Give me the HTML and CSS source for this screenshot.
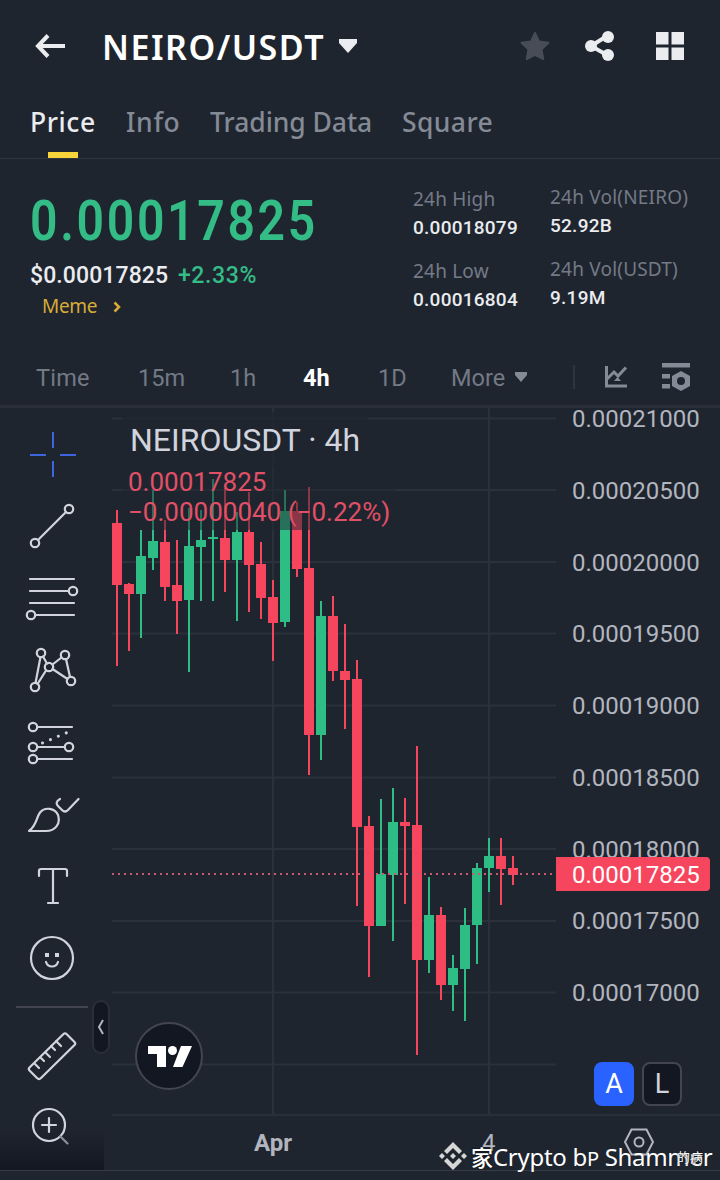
FILE: index.html
```
<!DOCTYPE html>
<html lang="en">
<head>
  <meta charset="UTF-8" />
  <meta name="viewport" content="width=device-width, initial-scale=1" />
  <title>NEIRO/USDT</title>
  <link rel="stylesheet" href="styles.css">
</head>
<body>

<header class="topbar">
  <svg class="back" width="32" height="24" viewBox="0 0 32 24"><path d="M14 1.500 4 12l10 10.500M4 12h27" /></svg>
  <h1 class="pair">NEIRO/USDT</h1>
  <svg class="caret" width="20" height="16" viewBox="0 0 20 16"><path d="M1 1h18v4l-9 10-9-10z" /></svg>
  <div class="actions">
    <svg class="star" width="32" height="32" viewBox="0 0 32 32"><path d="m16 3 4 8.500 9.500 1.200-7 6.700 1.800 9.600-8.300-4.200-8.300 4.200 1.800-9.600-7-6.700L12 11.500z" /></svg>
    <svg class="share" width="32" height="32" viewBox="0 0 32 32"><path d="M23 6 7 16l16 9" /><circle cx="7" cy="16" r="6" /><circle cx="24" cy="7" r="6" /><circle cx="24" cy="25" r="6" /></svg>
    <svg class="apps" width="28" height="28" viewBox="0 0 28 28"><path d="M0 0h12.500v12.500H0zM15.500 0H28v12.500H15.500zM0 15.500h12.500V28H0zM15.500 15.500H28V28H15.500z" /></svg>
  </div>
</header>

<nav class="tabs">
  <a class="tab tab-active">Price</a>
  <a class="tab tab-info">Info</a>
  <a class="tab tab-trading">Trading Data</a>
  <a class="tab">Square</a>
</nav>

<section class="ticker">
  <div class="quote">
    <div class="last-price">0.00017825</div>
    <div class="fiat"><span class="usd">$0.00017825</span><span class="change">+2.33%</span></div>
    <div class="tag">Meme <svg width="8" height="12" viewBox="0 0 8 12"><path d="m1.500 1.500 4.500 4.500-4.500 4.500" /></svg></div>
  </div>
  <div class="stats">
    <div class="stat"><span class="label">24h High</span><span class="value">0.00018079</span></div>
    <div class="stat"><span class="label">24h Low</span><span class="value">0.00016804</span></div>
  </div>
  <div class="stats stats-vol">
    <div class="stat"><span class="label">24h Vol(NEIRO)</span><span class="value">52.92B</span></div>
    <div class="stat"><span class="label">24h Vol(USDT)</span><span class="value">9.19M</span></div>
  </div>
</section>

<div class="intervals">
  <span class="iv iv-time">Time</span>
  <span class="iv iv-15m">15m</span>
  <span class="iv iv-1h">1h</span>
  <span class="iv iv-4h">4h</span>
  <span class="iv iv-1d">1D</span>
  <span class="iv iv-more">More</span>
  <svg class="more-caret" width="14" height="12" viewBox="0 0 14 12"><path d="M1 1h12v3l-6 7-6-7z" /></svg>
  <i class="split"></i>
  <svg class="chart-type" width="24" height="24" viewBox="0 0 24 24"><path d="M2.500 1v20H23M3 14l7-7 4 4 8-8.500" /><path class="fill" d="m13.500 12 3.500 4H10z" /></svg>
  <svg class="chart-set" width="28" height="28" viewBox="0 0 28 28"><path d="M0 0h28v4.500H0zM0 11h8v4.500H0zM0 21h8v4.500H0z" /><path fill-rule="evenodd" d="m19 8 9 5v10l-9 5-9-5V13zm0 6a4 4 0 1 0 0 8 4 4 0 0 0 0-8z" /></svg>
</div>

<main class="chart">
  <aside class="tools">
    <svg class="tool tool-active" viewBox="0 0 56 56"><path d="M29 5v16M29 34v16M6 28h16M36 28h16" /></svg>
    <svg class="tool" viewBox="0 0 56 56"><path d="m14 41 28-28" /><circle cx="11" cy="44" r="4.200" /><circle cx="45" cy="10" r="4.200" /></svg>
    <svg class="tool" viewBox="0 0 56 56"><path d="M6 8h44M6 20h39M6 32h44M11 44h39" /><circle cx="49" cy="20" r="4.200" /><circle cx="7" cy="44" r="4.200" /></svg>
    <svg class="tool" viewBox="0 0 56 56"><path d="m11.500 40 5-26M19 13.500l4 7M28.500 21.500l9-7M42 16l4 18M28.500 26l15 10M22 27.500 13.500 41" /><circle cx="17" cy="10" r="4.200" /><circle cx="41" cy="12" r="4.200" /><circle cx="25" cy="24" r="4.200" /><circle cx="11" cy="44" r="4.200" /><circle cx="47" cy="38" r="4.200" /></svg>
    <svg class="tool" viewBox="0 0 56 56"><path d="M13 12h35M13 32h28M13 44h35" /><path class="dots" d="m18.500 28 28-12" /><circle cx="9" cy="12" r="4.200" /><circle cx="9" cy="32" r="4.200" /><circle cx="9" cy="44" r="4.200" /><circle cx="45" cy="32" r="4.200" /></svg>
    <svg class="tool" viewBox="0 0 56 56"><path d="M5 44c8-6 7-13 11-18.500 5-6 15-4.500 18 2.500 3 9-3 16-12 16zM36 12c-4 2-4 5-2 7l4 4c2 2 4 2 6 0l10.500-11" /></svg>
    <svg class="tool" viewBox="0 0 56 56"><path d="M15 17v-5q0-2 2-2h24q2 0 2 2v5M29 10v34M24 44h10" /></svg>
    <svg class="tool" viewBox="0 0 56 56"><circle cx="28" cy="27" r="21" /><path d="M22 31c2 6 10 6 12 0" /><path class="eyes" d="M21 22h4v4h-4zM31 22h4v4h-4z" /></svg>
    <hr>
    <svg class="tool" viewBox="0 0 56 56"><path d="M39.500 6q1.500-1.500 3 0l8 8q1.500 1.500 0 3L17 50q-2 2-4 0l-7.500-7.500q-1.500-1.500 0-3zM10 35l5 5M16 29l4 4M21 24l5 5M27 18l4 4M32 13l5 5" /></svg>
    <svg class="tool" viewBox="0 0 56 56"><circle cx="25" cy="25" r="16" /><path d="M18 25h14M25 18v14" /><path class="handle" d="m36.500 36.500 7 7" /></svg>
  </aside>

  <div class="plot">
    <svg class="candles" width="444" height="706" viewBox="112 408 444 706">
      <path class="grid" d="M112 418.500h444M112 490h444M112 562h444M112 633.500h444M112 705.500h444M112 777.500h444M112 849h444M112 921h444M112 992.500h444M112 1064.500h444M273 408v707M489 408v707" />
      <path class="wick down" d="M117 510V666M129 583V651M165 520V601M177 540V634M225 488V592M249 492V612M261 542V619M273 580V661M297 502V577M309 487V775M333 596V681M345 624V729M357 660V906M369 816V977M405 798V904M417 746V1055M441 907V1000M501 838V905M513 856V885" />
      <path class="wick up" d="M141 530V638M153 490V570M189 508V672M201 510V601M213 479V601M237 512V621M285 490V627M321 601V760M381 799V926M393 788V941M429 877V973M453 955V1011M465 908V1021M477 863V964M489 838V892" />
      <path class="body down" d="M117 523V585M129 584V594M165 542V587M177 585V601M225 538V560M249 532V565M261 564V598M273 597V623M297 511V569M309 568V735M333 616V671M345 671V680M357 679V827M369 826V926M405 822V826M417 825V960M441 915V985M501 856V869M513 868V875" />
      <path class="body up" d="M141 556V594M153 541V558M189 546V600M201 540V547M213 537V539M237 532V560M285 511V622M321 616V735M381 874V926M393 822V875M429 915V960M453 968V985M465 925V969M477 868V925M489 856V868" />
      <path class="last-line" d="M112 874H556" />
    </svg>
    <div class="legend">
      <div class="symbol">NEIROUSDT · 4h</div>
      <div class="readout"><div>0.00017825</div><div>−0.00000040 (−0.22%)</div></div>
    </div>
    <svg class="tv" width="68" height="68" viewBox="0 0 68 68"><circle class="disc" cx="34" cy="34" r="33" /><path d="M13 24h18v21h-9V32h-9zM46 24h11l-9.500 21H38z" /><circle cx="37.500" cy="28.500" r="4.500" /></svg>
    <div class="collapse"><svg width="8" height="16" viewBox="0 0 8 16"><path d="M6 1 2 8l4 7" /></svg></div>
  </div>

  <div class="prices">
    <span>0.00021000</span>
    <span>0.00020500</span>
    <span>0.00020000</span>
    <span>0.00019500</span>
    <span>0.00019000</span>
    <span>0.00018500</span>
    <span>0.00018000</span>
    <span>0.00017500</span>
    <span>0.00017000</span>
    <div class="price-tag">0.00017825</div>
    <div class="scale-modes"><b class="mode mode-auto">A</b><b class="mode">L</b></div>
  </div>

  <div class="times">
    <span class="month">Apr</span>
    <span class="day">4</span>
    <svg class="gear" width="32" height="28" viewBox="0 0 32 28"><path d="M8.500 1.500h15L30 14l-6.500 12.500h-15L2 14z" /><circle cx="16" cy="14" r="4.500" /></svg>
  </div>

  <div class="watermark">
    <svg width="28" height="28" viewBox="0 0 28 28"><path d="m14 0 9 9-3 3-6-6-6 6-3-3zM14 28l-9-9 3-3 6 6 6-6 3 3zM3 11l3 3-3 3-3-3zM25 11l3 3-3 3-3-3zM14 11l3 3-3 3-3-3z" /></svg>
    <span class="wm-cjk">家</span><span class="wm-text">Crypto b<small>P</small> Shammer</span>
    <span class="wm-over">的病</span>
  </div>
</main>

</body>
</html>
```
FILE: styles.css
```
* { box-sizing: border-box; }
body {
  margin: 0;
  width: 720px;
  height: 1180px;
  overflow: hidden;
  background: #1f252f;
  color: #eaecef;
  font-family: "Noto Sans", sans-serif;
}
svg { display: block; flex: none; }

/* header */
.topbar {
  display: flex;
  align-items: center;
  height: 92px;
  padding: 0 36px 0 34px;
}
.back { fill: none; stroke: #eaecef; stroke-width: 4; }
.pair {
  width: 221px;
  margin: 2px 0 0 36px;
  font-size: 34px;
  line-height: 40px;
  font-weight: 650;
  letter-spacing: 1.5px;
  color: #fff;
  white-space: nowrap;
}
.caret { margin-left: 15px; fill: #eaecef; }
.actions { display: flex; align-items: center; gap: 32px; margin-left: auto; }
.star { margin-right: 1px; fill: #474d57; stroke: #474d57; stroke-width: 2; stroke-linejoin: round; }
.share { fill: #eaecef; }
.share path { fill: none; stroke: #eaecef; stroke-width: 4; }
.apps { fill: #eaecef; margin-left: 8px; }

.tabs {
  display: flex;
  height: 67px;
  padding-left: 30px;
  border-bottom: 1px solid #30363f;
  font-size: 26.5px;
  font-weight: 500;
  line-height: 60px;
  letter-spacing: 0.4px;
  color: #848a96;
  white-space: nowrap;
}
.tab { width: 96px; height: 66px; }
.tab-info { width: 84px; letter-spacing: 0.7px; }
.tab-trading { width: 192px; letter-spacing: -0.05px; }
.tab-active { color: #eaecef; letter-spacing: 0.6px; }
.tab-active::after {
  content: "";
  display: block;
  width: 30px;
  height: 6px;
  margin-left: 18px;
  background: #f8d33a;
}

/* ticker */
.ticker { display: flex; height: 187px; padding: 25px 0 0 30px; }
.quote { width: 383px; font-family: Roboto, sans-serif; }
.last-price {
  width: 330px;
  font-size: 56px;
  line-height: 74px;
  font-weight: 650;
  letter-spacing: 3.1px;
  color: #34bc87;
  /* condensed digits */
  transform: scaleX(0.86);
  transform-origin: 0 50%;
}
.fiat { font-size: 23px; line-height: 35px; font-weight: 500; }
.usd { display: inline-block; width: 148px; letter-spacing: 0.1px; }
.change { color: #34bc87; letter-spacing: 0.6px; }
.tag {
  display: flex;
  align-items: center;
  gap: 16px;
  padding-left: 12px;
  font-family: "Noto Sans", sans-serif;
  font-size: 19px;
  line-height: 27px;
  letter-spacing: -0.3px;
  color: #d9ab37;
}
.tag svg { fill: none; stroke: #d9ab37; stroke-width: 2.5; }
.stats { width: 137px; padding-top: 1px; white-space: nowrap; }
.stats-vol { margin-top: -2px; }
.stat { height: 72px; }
.label { display: block; font-size: 19px; line-height: 29px; letter-spacing: 0.2px; color: #747a86; }
.value {
  display: block;
  font-family: Roboto, sans-serif;
  font-size: 19px;
  line-height: 28px;
  font-weight: 500;
  letter-spacing: 0.25px;
}

/* interval bar */
.intervals {
  display: flex;
  align-items: center;
  height: 62px;
  padding: 2px 0 0 36px;
  border-bottom: 3px solid #292e38;
  font-family: Roboto, sans-serif;
  font-size: 23.5px;
  color: #737985;
}
.iv { padding-top: 2px; }
.iv-time { width: 102px; letter-spacing: 0.2px; }
.iv-15m { width: 92px; }
.iv-1h { width: 73px; }
.iv-4h { width: 75px; font-weight: 700; color: #fff; }
.iv-1d { width: 73px; }
.iv-more { width: 63px; }
.more-caret, .chart-set { fill: #848a96; }
.split { width: 2px; height: 24px; margin: 0 29px 0 45px; background: #2f353f; }
.chart-type { fill: none; stroke: #848a96; stroke-width: 3; }
.chart-type .fill { fill: #848a96; stroke: none; }
.chart-set { margin-left: 34px; }

/* chart */
.chart {
  position: relative;
  display: grid;
  grid-template: 706px 56px / 112px 444px 164px;
  height: 763px;
  border-bottom: 1px solid #363c46;
}
.tools { grid-row: 1 / 3; width: 104px; padding: 11px 0 0 24px; background: linear-gradient(transparent 720px, #131722); }
.tool {
  width: 56px;
  height: 56px;
  margin: 0 0 16px;
  fill: none;
  stroke: #d1d4dc;
  stroke-width: 2.2;
  stroke-linecap: round;
  stroke-linejoin: round;
}
.tool:first-child { margin-top: 8px; }
.tool-active { stroke: #3c66e0; stroke-width: 2; stroke-linecap: butt; }
.dots { stroke-width: 3; stroke-dasharray: 0.1 8.5; }
.eyes { fill: #d1d4dc; stroke: none; }
.handle { stroke: #8b8f99; }
.tools hr { width: 72px; height: 2px; margin: 19px 0 20px -8px; border: 0; background: #434651; }

.plot { position: relative; }
.grid { stroke: #2b313b; stroke-width: 2; }
.wick { stroke-width: 2; }
.body { stroke-width: 10; }
.up { stroke: #2ebd85; }
.down { stroke: #f6465d; }
.last-line { stroke: #c95970; stroke-width: 2; stroke-dasharray: 2 4; }
.legend { position: absolute; top: 4px; left: 10px; font-family: Roboto, sans-serif; white-space: nowrap; }
.symbol {
  width: 246px;
  height: 55px;
  padding-left: 8px;
  font-size: 32px;
  line-height: 57px;
  color: #d1d4dc;
  background: rgba(31, 37, 47, 0.7);
}
.readout {
  width: 273px;
  height: 63px;
  padding-left: 6px;
  font-size: 26px;
  line-height: 30px;
  color: #e15067;
  background: rgba(31, 37, 47, 0.5);
}
.tv { position: absolute; left: 23px; top: 614px; fill: #fff; }
.tv .disc { fill: #131722; stroke: #434651; stroke-width: 2; }
.collapse {
  position: absolute;
  left: -20px;
  top: 592px;
  display: flex;
  align-items: center;
  justify-content: center;
  width: 18px;
  height: 54px;
  border: 2px solid #2a2e39;
  border-radius: 9px;
  background: #131722;
}
.collapse path { fill: none; stroke: #b2b5be; stroke-width: 2; }

.prices {
  position: relative;
  display: flex;
  flex-direction: column;
  gap: 45.75px;
  padding: 0 0 8px 16px;
  font-family: Roboto, sans-serif;
  font-size: 24px;
  line-height: 26px;
  color: #b2b5be;
}
.prices span { height: 26px; margin-top: -2px; margin-bottom: 2px; }
.price-tag {
  position: absolute;
  top: 449px;
  left: 0;
  width: 154px;
  height: 34px;
  padding-left: 16px;
  line-height: 36px;
  border-radius: 0 4px 4px 0;
  color: #fff;
  background: #f6465d;
}
.scale-modes { display: flex; gap: 8px; margin: auto 0 0 22px; }
.mode {
  width: 40px;
  height: 44px;
  border: 2px solid #434651;
  border-radius: 8px;
  font-size: 27px;
  font-weight: 400;
  line-height: 40px;
  text-align: center;
  color: #d1d4dc;
  background: #131722;
}
.mode-auto { border-color: #2962ff; color: #fff; background: #2962ff; }

.times {
  grid-column: 2 / 4;
  display: flex;
  align-items: center;
  border-top: 2px solid #292f39;
  font-family: Roboto, sans-serif;
  font-size: 24px;
  color: #b2b5be;
}
.month { width: 228px; padding-left: 142px; font-weight: 700; }
.day { margin-left: 142px; }
.gear { margin-left: 127px; margin-top: -2px; fill: none; stroke: #b2b5be; stroke-width: 2; }

.watermark {
  position: absolute;
  left: 439px;
  top: 732px;
  display: flex;
  align-items: center;
  height: 32px;
  font-family: "Noto Sans", "Noto Sans CJK SC", sans-serif;
  font-size: 24px;
  color: #fff;
  white-space: nowrap;
}
.watermark svg { fill: #d6d6d6; }
.wm-cjk {
  width: 22px;
  margin-left: 4px;
  font-size: 22px;
  font-weight: 500;
  text-shadow: 0 0 2px #000;
}
.wm-text { letter-spacing: -0.3px; }
.wm-text small { font-size: 20px; }
.wm-over { position: absolute; left: 238px; top: 10px; font-size: 13px; line-height: 14px; text-shadow: 0 0 2px #000; }
```
